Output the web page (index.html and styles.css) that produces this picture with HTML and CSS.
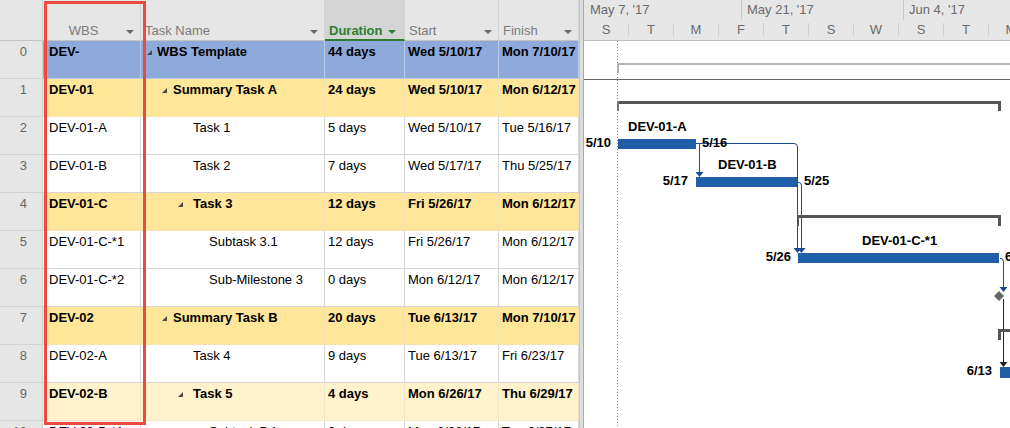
FILE: index.html
```html
<!DOCTYPE html>
<html lang="en">

<head>
    <meta charset="UTF-8" />
    <title>WBS Gantt</title>
    <link rel="stylesheet" href="styles.css">
</head>

<body>
    <div class="view">
        <div class="sheet">
            <div class="row head">
                <div class="hcell"></div>
                <div class="hcell"><span class="hlabel center">WBS</span><span class="caret"></span></div>
                <div class="hcell"><span class="hlabel">Task Name</span><span class="caret"></span></div>
                <div class="hcell sorted"><span>Duration</span><span class="caret green"></span></div>
                <div class="hcell"><span class="hlabel">Start</span><span class="caret"></span></div>
                <div class="hcell"><span class="hlabel">Finish</span><span class="caret"></span></div>
            </div>

            <div class="row project">
                <div class="cell num">0</div>
                <div class="cell">DEV-</div>
                <div class="cell name lvl0"><span class="tri"></span>WBS Template</div>
                <div class="cell">44 days</div>
                <div class="cell">Wed 5/10/17</div>
                <div class="cell">Mon 7/10/17</div>
            </div>
            <div class="row summary">
                <div class="cell num">1</div>
                <div class="cell">DEV-01</div>
                <div class="cell name lvl1"><span class="tri"></span>Summary Task A</div>
                <div class="cell">24 days</div>
                <div class="cell">Wed 5/10/17</div>
                <div class="cell">Mon 6/12/17</div>
            </div>
            <div class="row">
                <div class="cell num">2</div>
                <div class="cell">DEV-01-A</div>
                <div class="cell name leaf2">Task 1</div>
                <div class="cell">5 days</div>
                <div class="cell">Wed 5/10/17</div>
                <div class="cell">Tue 5/16/17</div>
            </div>
            <div class="row">
                <div class="cell num">3</div>
                <div class="cell">DEV-01-B</div>
                <div class="cell name leaf2">Task 2</div>
                <div class="cell">7 days</div>
                <div class="cell">Wed 5/17/17</div>
                <div class="cell">Thu 5/25/17</div>
            </div>
            <div class="row summary">
                <div class="cell num">4</div>
                <div class="cell">DEV-01-C</div>
                <div class="cell name lvl2"><span class="tri"></span>Task 3</div>
                <div class="cell">12 days</div>
                <div class="cell">Fri 5/26/17</div>
                <div class="cell">Mon 6/12/17</div>
            </div>
            <div class="row">
                <div class="cell num">5</div>
                <div class="cell">DEV-01-C-*1</div>
                <div class="cell name leaf3">Subtask 3.1</div>
                <div class="cell">12 days</div>
                <div class="cell">Fri 5/26/17</div>
                <div class="cell">Mon 6/12/17</div>
            </div>
            <div class="row">
                <div class="cell num">6</div>
                <div class="cell">DEV-01-C-*2</div>
                <div class="cell name leaf3">Sub-Milestone 3</div>
                <div class="cell">0 days</div>
                <div class="cell">Mon 6/12/17</div>
                <div class="cell">Mon 6/12/17</div>
            </div>
            <div class="row summary">
                <div class="cell num">7</div>
                <div class="cell">DEV-02</div>
                <div class="cell name lvl1"><span class="tri"></span>Summary Task B</div>
                <div class="cell">20 days</div>
                <div class="cell">Tue 6/13/17</div>
                <div class="cell">Mon 7/10/17</div>
            </div>
            <div class="row">
                <div class="cell num">8</div>
                <div class="cell">DEV-02-A</div>
                <div class="cell name leaf2">Task 4</div>
                <div class="cell">9 days</div>
                <div class="cell">Tue 6/13/17</div>
                <div class="cell">Fri 6/23/17</div>
            </div>
            <div class="row summary light">
                <div class="cell num">9</div>
                <div class="cell">DEV-02-B</div>
                <div class="cell name lvl2"><span class="tri"></span>Task 5</div>
                <div class="cell">4 days</div>
                <div class="cell">Mon 6/26/17</div>
                <div class="cell">Thu 6/29/17</div>
            </div>
            <div class="row">
                <div class="cell num">10</div>
                <div class="cell">DEV-02-B-*1</div>
                <div class="cell name leaf3">Subtask 5.1</div>
                <div class="cell">2 days</div>
                <div class="cell">Mon 6/26/17</div>
                <div class="cell">Tue 6/27/17</div>
            </div>
        </div>

        <div class="splitter"></div>

        <div class="chart">
            <div class="timescale">
                <div class="tier-top">
                    <div class="period first">May 7, '17</div>
                    <div class="period">May 21, '17</div>
                    <div class="period">Jun 4, '17</div>
                </div>
                <div class="tier-bottom">
                    <div class="unit first">S</div>
                    <div class="unit">T</div>
                    <div class="unit">M</div>
                    <div class="unit">F</div>
                    <div class="unit">T</div>
                    <div class="unit">S</div>
                    <div class="unit">W</div>
                    <div class="unit">S</div>
                    <div class="unit">T</div>
                    <div class="unit">M</div>
                </div>
            </div>

            <svg class="bars" width="426" height="387" viewBox="584 41 426 387">
                <!-- status date -->
                <line x1="617.5" y1="41" x2="617.5" y2="428" stroke="#8a8a8a" stroke-dasharray="1 2" />

                <!-- project summary -->
                <rect x="618" y="63" width="392" height="2" fill="#b4b4b4" />
                <rect x="617" y="63" width="2" height="10" fill="#b0b0b0" />
                <line x1="584" y1="79.5" x2="1010" y2="79.5" stroke="#666" />

                <!-- summary task A -->
                <rect x="617" y="101" width="384" height="3" fill="#555" />
                <rect x="617" y="101" width="2" height="10" fill="#777" />
                <rect x="998" y="101" width="3" height="10" fill="#555" />

                <!-- links -->
                <g fill="none" stroke="#1c4a8f">
                    <path d="M696 143.5 H794 Q797.5 143.5 797.5 147 V249" />
                    <path d="M699.5 143.5 V173" />
                    <path d="M797 182.5 H799 Q801.5 182.5 801.5 186 V249" />
                    <path d="M1000 258.5 H1001 Q1003.5 258.5 1003.5 262 V288" />
                </g>
                <g fill="#1c4a8f">
                    <polygon points="695.5,172 703.5,172 699.5,177" />
                    <polygon points="793.5,248 801.5,248 797.5,253" />
                    <polygon points="797.5,248 805.5,248 801.5,253" />
                    <polygon points="999.5,287 1007.5,287 1003.5,292" />
                </g>
                <line x1="1003.5" y1="299" x2="1003.5" y2="363" stroke="#222" />
                <polygon points="999.5,362 1007.5,362 1003.5,367" fill="#222" />

                <!-- task bars -->
                <rect x="618" y="139" width="78" height="10" fill="#215ea8" />
                <rect x="696" y="177" width="101" height="10" fill="#215ea8" />
                <rect x="798" y="253" width="201" height="10" fill="#215ea8" />
                <rect x="1000" y="367" width="10" height="11" fill="#215ea8" />

                <!-- task 3 summary -->
                <rect x="797" y="215" width="204" height="3" fill="#555" />
                <rect x="797" y="215" width="2" height="11" fill="#555" />
                <rect x="998" y="215" width="3" height="11" fill="#555" />

                <!-- milestone -->
                <polygon points="999,291 1004,296 999,301 994,296" fill="#666" />

                <!-- summary task B -->
                <rect x="998" y="329" width="3" height="11" fill="#555" />
                <rect x="998" y="329" width="12" height="3" fill="#555" />

                <!-- labels -->
                <g class="bar-label">
                    <text x="628" y="131">DEV-01-A</text>
                    <text x="611" y="147" text-anchor="end">5/10</text>
                    <text x="702" y="147">5/16</text>
                    <text x="718" y="169">DEV-01-B</text>
                    <text x="688" y="185" text-anchor="end">5/17</text>
                    <text x="804" y="185">5/25</text>
                    <text x="862" y="245">DEV-01-C-*1</text>
                    <text x="791" y="261" text-anchor="end">5/26</text>
                    <text x="1005" y="261">6/12</text>
                    <text x="992" y="375" text-anchor="end">6/13</text>
                </g>
            </svg>
        </div>

        <div class="highlight"></div>
    </div>
</body>

</html>
```

FILE: styles.css
```css
body {
    margin: 0;
    font-family: "Liberation Sans", Arial, sans-serif;
    font-size: 13px;
    background: #ffffff;
    overflow: hidden;
}

.view {
    display: flex;
    width: 1010px;
    height: 428px;
    position: relative;
    overflow: hidden;
}

/* ---------- sheet ---------- */

.sheet {
    width: 579px;
    flex: none;
}

.row {
    display: grid;
    grid-template-columns: 43px 98px 184px 80px 94px 80px;
    height: 38px;
}

.head {
    height: 41px;
    background: #e6e6e6;
}

.hcell {
    display: flex;
    align-items: center;
    padding: 20px 6px 0 4px;
    height: 41px;
    box-sizing: border-box;
    border-right: 1px solid #d2d2d2;
    border-bottom: 1px solid #c4c4c4;
    color: #7a7a7a;
    white-space: nowrap;
}

.hlabel {
    flex: 1;
}

.hlabel.center {
    text-align: center;
}

.hcell.sorted {
    background: #d4d4d4;
    color: #2f7d32;
    font-weight: bold;
    border-bottom: 2px solid #2f7d32;
    padding-top: 21px;
}

.caret {
    width: 0;
    height: 0;
    margin-left: 6px;
    margin-top: 3px;
    border-left: 4px solid transparent;
    border-right: 4px solid transparent;
    border-top: 4px solid #666;
}

.caret.green {
    border-top-color: #2f7d32;
}

.cell {
    padding: 3px 3px 0 3px;
    line-height: 16px;
    box-sizing: border-box;
    border-right: 1px solid #d6d6d6;
    border-bottom: 1px solid #d6d6d6;
    white-space: nowrap;
    overflow: hidden;
    color: #000;
}

.cell:nth-child(2) {
    padding-left: 6px;
}

.cell.num {
    background: #e6e6e6;
    color: #666;
    text-align: right;
    padding-right: 15px;
    border-bottom-color: #d2d2d2;
    border-right-color: #cfcfcf;
}

.project .cell {
    background: #8eaadb;
    font-weight: bold;
    border-color: #b9cbe9;
}

.summary .cell {
    background: #ffe699;
    font-weight: bold;
    border-color: #f3e2b4;
}

.summary.light .cell {
    background: #fff2cc;
    border-color: #efe5c8;
}

.project .cell.num,
.summary .cell.num {
    background: #e6e6e6;
    font-weight: normal;
    border-bottom-color: #d2d2d2;
    border-right-color: #cfcfcf;
}

/* name indents */
.tri {
    display: inline-block;
    width: 0;
    height: 0;
    border-left: 5px solid transparent;
    border-bottom: 5px solid #4a4a4a;
    margin-bottom: 1px;
}

.lvl0 { padding-left: 6px; }
.lvl0 .tri { margin-right: 5px; }
.lvl1 { padding-left: 21px; }
.lvl1 .tri { margin-right: 6px; }
.lvl2 { padding-left: 37px; }
.lvl2 .tri { margin-right: 10px; }
.leaf2 { padding-left: 52px; }
.leaf3 { padding-left: 68px; }

/* ---------- splitter ---------- */

.splitter {
    width: 5px;
    flex: none;
    box-sizing: border-box;
    background: #dedede;
    border-left: 1px solid #c6c6c6;
    border-right: 1px solid #a9a9a9;
}

/* ---------- chart ---------- */

.chart {
    flex: 1;
    min-width: 0;
    background: #fff;
}

.timescale {
    height: 41px;
    background: #e6e6e6;
    border-bottom: 1px solid #bdbdbd;
    box-sizing: border-box;
    color: #6b6b6b;
    overflow: hidden;
}

.tier-top {
    display: flex;
    height: 20px;
}

.period {
    flex: none;
    width: 156px;
    padding-left: 5px;
    line-height: 20px;
    border-left: 1px solid #c8c8c8;
    white-space: nowrap;
}

.period.first {
    width: 157px;
    padding-left: 6px;
    border-left: none;
    box-sizing: border-box;
}

.tier-bottom {
    display: flex;
    height: 20px;
}

.unit {
    flex: none;
    width: 44px;
    height: 13px;
    margin-top: 3px;
    line-height: 13px;
    text-align: center;
    border-left: 1px solid #cfcfcf;
}

.unit.first {
    width: 44px;
    border-left: none;
}

.bars {
    display: block;
}

.bar-label {
    font: bold 13px "Liberation Sans", Arial, sans-serif;
    fill: #000;
}

/* ---------- annotation ---------- */

.highlight {
    position: absolute;
    left: 44px;
    top: 1px;
    width: 102px;
    height: 424px;
    border: 3px solid #e94b3f;
    box-sizing: border-box;
    pointer-events: none;
}
```
